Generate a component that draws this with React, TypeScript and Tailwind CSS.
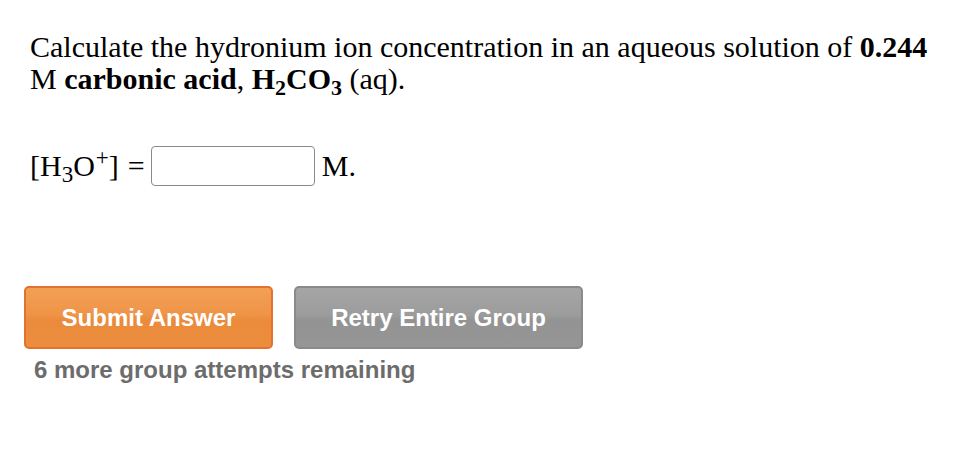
export default function App() {
  return (
    <div className="w-[974px] h-[454px] bg-white">
      <div className="pl-[30px] pt-[31px] text-[30px] leading-[32px] text-black font-['Liberation_Serif',serif]">
        <p className="w-[915px]">
          Calculate the hydronium ion concentration in an aqueous solution of <b>0.244</b> M{" "}
          <b>carbonic acid</b>,{" "}
          <b>
            H<span className="text-[22px] align-[-6px]">2</span>CO<span className="text-[22px] align-[-6px]">3</span>
          </b>{" "}
          (aq).
        </p>

        <div className="mt-[42px] flex items-center h-[40px]">
          <span className="whitespace-nowrap">
            [H<span className="text-[23px] align-[-6px]">3</span>O<span className="text-[23px] align-[11px] ml-[1px]">+</span>]
            <span className="ml-[9px]">=</span>
          </span>
          <input
            type="text"
            className="ml-[6px] w-[164px] h-[40px] border border-[#8a8a8a] rounded-[4px] outline-none"
          />
          <span className="ml-[7px]">M.</span>
        </div>
      </div>

      <div className="pl-[24px] mt-[100px] flex gap-[21px] font-['Liberation_Sans',Arial,sans-serif] font-bold text-[24px]">
        <button className="w-[249px] h-[63px] rounded-[5px] border-2 border-[#e2722f] bg-[linear-gradient(to_bottom,#f2a055_0%,#ef9447_45%,#eb8a3b_55%,#ec8d3e_100%)] text-white">
          Submit Answer
        </button>
        <button className="w-[289px] h-[63px] rounded-[5px] border-2 border-[#8a8a8a] bg-[linear-gradient(to_bottom,#a5a5a5_0%,#9c9c9c_45%,#939393_55%,#969696_100%)] text-white">
          Retry Entire Group
        </button>
      </div>
      <p className="pl-[34px] mt-[3px] font-['Liberation_Sans',Arial,sans-serif] font-bold text-[24px] text-[#6c6c6c]">
        6 more group attempts remaining
      </p>
    </div>
  )
}
